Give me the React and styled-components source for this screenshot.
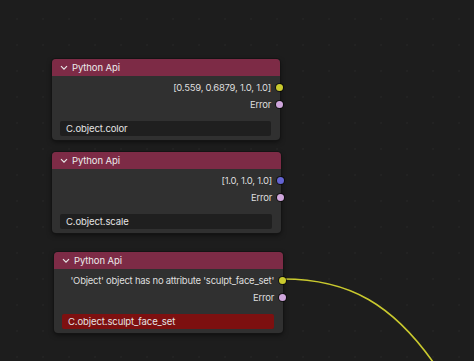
import styled, { createGlobalStyle } from 'styled-components'

const GlobalStyle = createGlobalStyle`
    html, body {
        margin: 0;
        padding: 0;
        background: #1d1d1d;
    }
    body {
        font-family: Inter, "DejaVu Sans", sans-serif;
    }
`

const nodes = [
    {
        x: 52,
        y: 59,
        w: 228,
        out: '[0.559, 0.6879, 1.0, 1.0]',
        socket: '#c9c92e',
        expr: 'C.object.color',
    },
    {
        x: 52,
        y: 152,
        w: 229,
        out: '[1.0, 1.0, 1.0]',
        socket: '#6464d2',
        expr: 'C.object.scale',
    },
    {
        x: 54,
        y: 252,
        w: 229,
        out: "'Object' object has no attribute 'sculpt_face_set'",
        socket: '#c9c92e',
        expr: 'C.object.sculpt_face_set',
        failed: true,
    },
]

const Chevron = () => (
    <svg width="8" height="6" viewBox="0 0 8 6">
        <path d="M1 1.2 L4 4.2 L7 1.2" fill="none" stroke="#e8e8e8" strokeWidth="1.2" />
    </svg>
)

const PythonNode = ({ node }) => (
    <Node style={{ left: node.x, top: node.y, width: node.w }}>
        <Header>
            <Chevron />
            <span>Python Api</span>
        </Header>
        <Body>
            <OutRow>
                {node.out}
                <Socket color={node.socket} />
            </OutRow>
            <OutRow>
                Error
                <Socket color="#cfa6dc" />
            </OutRow>
            <Field failed={node.failed}>{node.expr}</Field>
        </Body>
    </Node>
)

export default function App() {
    return (
        <>
            <GlobalStyle />
            <Canvas>
                <Wires width="474" height="361">
                    <path
                        d="M283 279 C 345 279, 395 300, 445 380"
                        fill="none"
                        stroke="#c9c92e"
                        strokeWidth="1.6"
                    />
                </Wires>
                {nodes.map((n, i) => (
                    <PythonNode key={i} node={n} />
                ))}
            </Canvas>
        </>
    )
}

const Canvas = styled.div`
    position: relative;
    width: 474px;
    height: 361px;
    overflow: hidden;
    background-color: #1d1d1d;
    background-image: radial-gradient(circle, #222 0.7px, transparent 1.1px);
    background-size: 26px 26px;
    background-position: 4px 6px;
`
const Wires = styled.svg`
    position: absolute;
    left: 0;
    top: 0;
`
const Node = styled.div`
    position: absolute;
    display: flex;
    flex-direction: column;
    border-radius: 4px;
    background: #303030;
    box-shadow: 0 0 0 1px #141414, 0 2px 5px rgba(0, 0, 0, 0.55);
`
const Header = styled.div`
    height: 17px;
    display: flex;
    align-items: center;
    gap: 4px;
    padding-left: 8px;
    background: #7d2b46;
    border-radius: 4px 4px 0 0;
    color: #ececec;
    font-size: 9.5px;
    letter-spacing: -0.1px;
`
const Body = styled.div`
    display: flex;
    flex-direction: column;
    padding: 3px 9px 4px 8px;
`
const OutRow = styled.div`
    position: relative;
    height: 17px;
    display: flex;
    align-items: center;
    justify-content: flex-end;
    white-space: nowrap;
    color: #dedede;
    font-size: 9.5px;
    letter-spacing: -0.25px;
`
const Socket = styled.span`
    position: absolute;
    right: -12px;
    top: 5px;
    width: 7px;
    height: 7px;
    border-radius: 50%;
    background: ${(props) => props.color};
    box-shadow: 0 0 0 1px rgba(0, 0, 0, 0.6);
`
const Field = styled.div`
    margin-top: 8px;
    height: 15px;
    display: flex;
    align-items: center;
    padding-left: 6px;
    border-radius: 2px;
    background: ${(props) => (props.failed ? '#7d1010' : '#1f1f1f')};
    color: #e4e4e4;
    font-size: 9.5px;
    letter-spacing: -0.1px;
`
